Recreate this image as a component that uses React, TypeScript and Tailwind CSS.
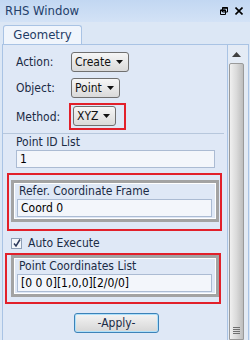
import { useState } from "react"

function Caret() {
  return (
    <svg width="7" height="4" viewBox="0 0 7 4">
      <path d="M0 0h7L3.5 4z" fill="#111" />
    </svg>
  )
}

function Dropdown({ value, className = "" }: { value: string; className?: string }) {
  return (
    <div
      className={`flex h-5 w-fit items-center gap-[5px] rounded-[3px] border border-[#707070] bg-gradient-to-b from-[#f6f6f6] to-[#dadada] pl-[3px] pr-[5px] text-[#111] ${className}`}
    >
      <span>{value}</span>
      <Caret />
    </div>
  )
}

function TextBox({ value, className = "" }: { value: string; className?: string }) {
  return (
    <div className={`flex h-[18px] items-center border border-[#abbbd3] bg-[#f3f6fb] px-[3px] text-black ${className}`}>
      {value}
    </div>
  )
}

function Group({ label, value, className = "" }: { label: string; value: string; className?: string }) {
  return (
    <div className={`border-2 border-[#e2202a] ${className}`}>
      <div className="border-[3px] border-[#a3a3a3]">
        <div className="border border-white pb-[1px] pl-[2px] pr-[3px]">
          <div className="flex h-[14px] items-center pl-[2px] text-[#1b2b45]">{label}</div>
          <TextBox value={value} className="mt-[1px]" />
        </div>
      </div>
    </div>
  )
}

export default function App() {
  const [auto, setAuto] = useState(true)

  return (
    <div
      className="flex h-[340px] w-[250px] flex-col overflow-hidden bg-[#dce7f5] text-[12px] leading-[14px] text-[#1b2b45]"
      style={{ fontFamily: "'DejaVu Sans Condensed', 'DejaVu Sans', sans-serif" }}
    >
      {/* title bar */}
      <div className="flex h-[22px] items-center justify-between bg-gradient-to-b from-[#c2d7f2] to-[#d3e2f6] pl-[5px] pr-[7px] text-[13px]">
        <span className="text-[#24406a]">RHS Window</span>
        <div className="flex items-center gap-[7px]">
          <svg width="8" height="8" viewBox="0 0 8 8">
            <path d="M2.5 0.5h5v4.5h-5z M0.5 3h5v4.5h-5z" fill="none" stroke="#000" strokeWidth="1" />
            <path d="M2.5 1h5" stroke="#000" strokeWidth="1.6" />
            <path d="M0.5 3.5h5" stroke="#000" strokeWidth="1.6" />
          </svg>
          <svg width="8" height="8" viewBox="0 0 8 8">
            <path d="M0.5 0.5l7 7M7.5 0.5l-7 7" stroke="#000" strokeWidth="1.6" />
          </svg>
        </div>
      </div>

      {/* tab strip */}
      <div className="flex h-[22px] items-end pl-[3px]">
        <div className="flex h-[19px] w-[79px] items-center justify-center rounded-t-[3px] border border-b-0 border-[#a9c3e4] bg-[#f0f5fc] text-[13px] text-[#1f3c66]">
          Geometry
        </div>
      </div>

      <div className="flex min-h-0 flex-1 pl-[2px]">
        {/* panel */}
        <div className="flex flex-1 flex-col border-l border-t border-[#a9c3e4] bg-[#dfe8f6]">
          <div className="flex items-center pl-[13px] pt-[7px]">
            <span className="w-[55px]">Action:</span>
            <Dropdown value="Create" />
          </div>
          <div className="mt-[6px] flex items-center pl-[13px]">
            <span className="w-[55px]">Object:</span>
            <Dropdown value="Point" />
          </div>
          <div className="mt-[5px] flex items-center pl-[13px]">
            <span className="w-[53px]">Method:</span>
            <div className="w-[57px] border-2 border-[#e2202a] pb-[2px] pl-[2px] pt-[1px]">
              <Dropdown value="XYZ" />
            </div>
          </div>

          <div className="mr-[3px] mt-[3px] border-t border-[#b7c7dc]" />

          <div className="pl-[13px] pr-[12px] pt-[1px]">
            <div className="flex h-[14px] items-center">Point ID List</div>
            <TextBox value="1" className="mt-[1px]" />
          </div>

          <Group
            label="Refer. Coordinate Frame"
            value="Coord 0"
            className="ml-[4px] mr-[5px] mt-[5px] pb-[7px] pl-[2px] pr-[1px] pt-[5px]"
          />

          <label className="ml-[8px] mt-[6px] flex h-[12px] items-center gap-[6px]">
            <span
              onClick={() => setAuto(!auto)}
              className="flex h-[11px] w-[11px] items-center justify-center border border-[#8f9fb6] bg-[#f4f7fb]"
            >
              {auto && (
                <svg width="8" height="8" viewBox="0 0 8 8">
                  <path d="M1 4.5l2 2.5 4-6.5" fill="none" stroke="#2d3a5c" strokeWidth="1.5" />
                </svg>
              )}
            </span>
            <span>Auto Execute</span>
          </label>

          <Group
            label="Point Coordinates List"
            value="[0 0 0][1,0,0][2/0/0]"
            className="ml-[2px] mr-[6px] mt-[4px] pb-[5px] pl-[4px] pr-[0px] pt-0"
          />

          <div className="mt-[9px] flex pl-[71px]">
            <button className="flex h-[20px] w-[85px] items-center justify-center rounded-[3px] border border-[#3c82b8] bg-gradient-to-b from-[#f4f4f4] to-[#d6d6d6] text-[12px] text-[#1b2b45] shadow-[inset_0_0_0_1px_#aee0fa]">
              -Apply-
            </button>
          </div>
        </div>

        {/* scrollbar */}
        <div className="flex w-[21px] flex-col border-l border-t border-[#a9c3e4] bg-[#e4ebf5] pl-[1px] pr-[4px]">
          <div className="flex h-[18px] items-center justify-center">
            <svg width="9" height="5" viewBox="0 0 9 5">
              <path d="M0 5h9L4.5 0z" fill="#404040" />
            </svg>
          </div>
          <div className="flex flex-1 flex-col items-center justify-end rounded-t-[2px] border border-[#9a9a9a] bg-gradient-to-r from-[#f0f0f0] via-[#dadada] to-[#bdbdbd] pb-[5px]">
            <div className="flex flex-col gap-[1px]">
              <div className="h-px w-[7px] bg-[#707070]" />
              <div className="h-px w-[7px] bg-[#707070]" />
              <div className="h-px w-[7px] bg-[#707070]" />
              <div className="h-px w-[7px] bg-[#707070]" />
            </div>
          </div>
        </div>
        <div className="w-[2px] border-l border-[#a9c3e4]" />
      </div>
    </div>
  )
}
